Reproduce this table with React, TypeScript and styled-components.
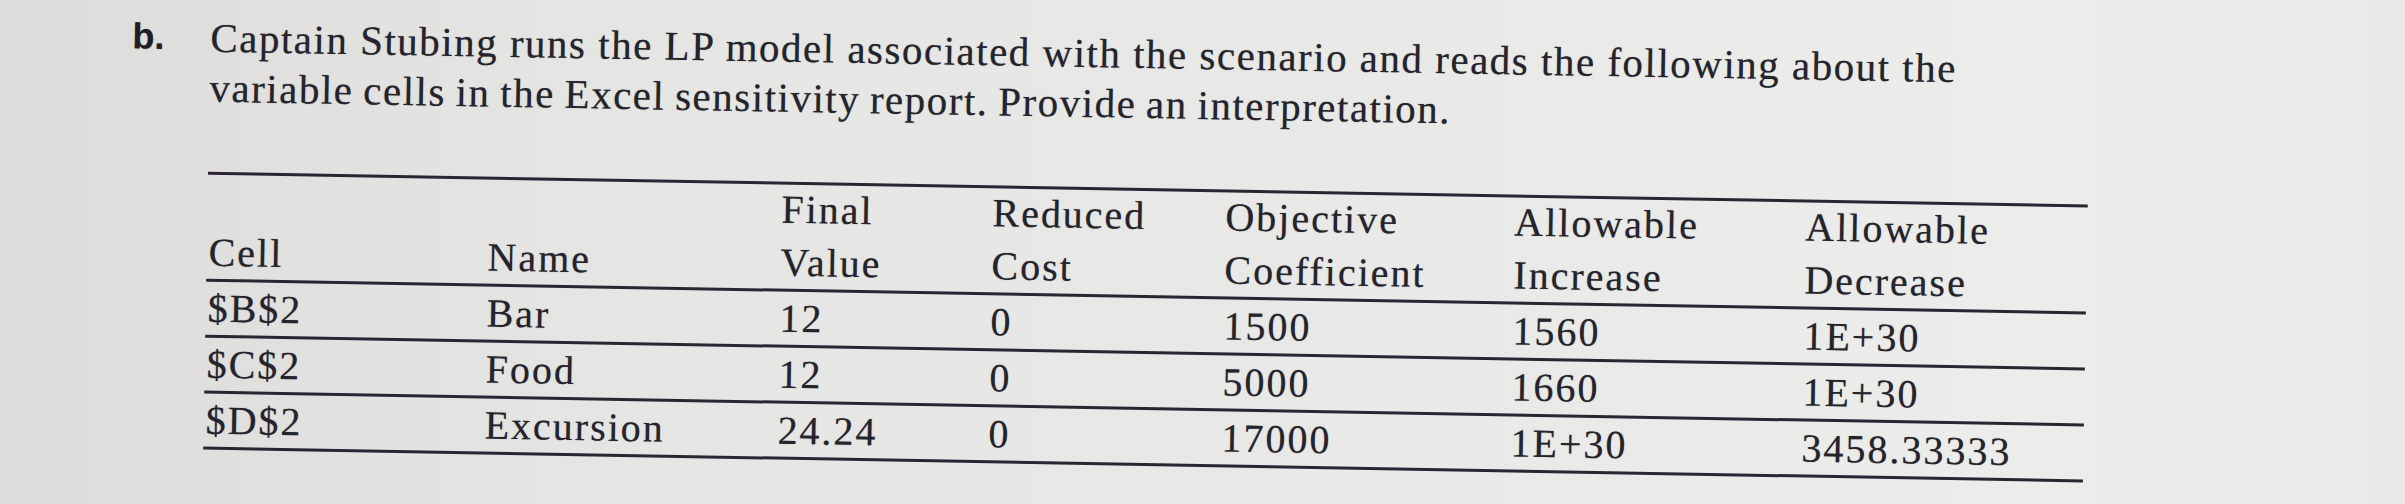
import React from 'react'
import styled, { createGlobalStyle } from 'styled-components'

const GlobalStyle = createGlobalStyle`
  html, body {
    margin: 0;
    padding: 0;
    background: #e6e6e4;
  }
`

const columns = '279px 293px 211px 233px 289px 291px 1fr'

const rows = [
  { cell: '$B$2', name: 'Bar', final: '12', reduced: '0', objective: '1500', inc: '1560', dec: '1E+30' },
  { cell: '$C$2', name: 'Food', final: '12', reduced: '0', objective: '5000', inc: '1660', dec: '1E+30' },
  { cell: '$D$2', name: 'Excursion', final: '24.24', reduced: '0', objective: '17000', inc: '1E+30', dec: '3458.33333' },
]

const App: React.FC = () => {
  return (
    <Page>
      <GlobalStyle />
      <Sheet>
        <Question>
          <Label>b.</Label>
          <Prompt>
            <Line $wide>Captain Stubing runs the LP model associated with the scenario and reads the following about the</Line>
            <Line>variable cells in the Excel sensitivity report. Provide an interpretation.</Line>
          </Prompt>
        </Question>

        <Table>
          <HeaderRow>
            <HeadCell $bottom>Cell</HeadCell>
            <HeadCell $bottom>Name</HeadCell>
            <HeadCell>Final<br />Value</HeadCell>
            <HeadCell>Reduced<br />Cost</HeadCell>
            <HeadCell>Objective<br />Coefficient</HeadCell>
            <HeadCell>Allowable<br />Increase</HeadCell>
            <HeadCell>Allowable<br />Decrease</HeadCell>
          </HeaderRow>
          {rows.map((r) => (
            <Row key={r.cell}>
              <Cell>{r.cell}</Cell>
              <Cell>{r.name}</Cell>
              <Cell>{r.final}</Cell>
              <Cell>{r.reduced}</Cell>
              <Cell>{r.objective}</Cell>
              <Cell>{r.inc}</Cell>
              <Cell>{r.dec}</Cell>
            </Row>
          ))}
        </Table>
      </Sheet>
    </Page>
  )
}

const Page = styled.div`
  width: 2405px;
  height: 504px;
  overflow: hidden;
  background: linear-gradient(90deg, #dddcda 0%, #e5e5e3 25%, #e9e9e7 60%, #ececea 85%, #e9e9e7 100%);
  color: #25232c;
  font-family: 'Liberation Serif', 'Times New Roman', serif;
  text-shadow: 0 0 1px rgba(30, 28, 40, 0.45);
`

const Sheet = styled.div`
  transform: rotate(1deg);
  transform-origin: 0 0;
  padding: 9px 0 0 133px;
`

const Question = styled.div`
  display: flex;
  align-items: flex-start;
`

const Label = styled.div`
  width: 78px;
  font-family: 'Liberation Sans', Arial, sans-serif;
  font-weight: 700;
  font-size: 36px;
  line-height: 50px;
  color: #1f1d26;
`

const Prompt = styled.div`
  font-size: 41px;
  line-height: 50px;
  letter-spacing: 1.5px;
`

const Line = styled.div<{ $wide?: boolean }>`
  white-space: nowrap;
  word-spacing: ${(p) => (p.$wide ? '0px' : '-2px')};
`

const Table = styled.div`
  margin: 59px 0 0 78px;
  width: 1880px;
  border-top: 3px solid #2a2433;
  font-size: 40px;
  letter-spacing: 2px;
`

const HeaderRow = styled.div`
  display: grid;
  grid-template-columns: ${columns};
  border-bottom: 3px solid #2a2433;
  line-height: 53px;
  margin-top: -2px;
`

const HeadCell = styled.div<{ $bottom?: boolean }>`
  align-self: ${(p) => (p.$bottom ? 'end' : 'start')};
  padding-left: 2px;
  white-space: nowrap;
`

const Row = styled.div`
  display: grid;
  grid-template-columns: ${columns};
  border-bottom: 3px solid #2a2433;
  line-height: 53px;
`

const Cell = styled.div`
  padding-left: 2px;
  white-space: nowrap;
`

export default App
